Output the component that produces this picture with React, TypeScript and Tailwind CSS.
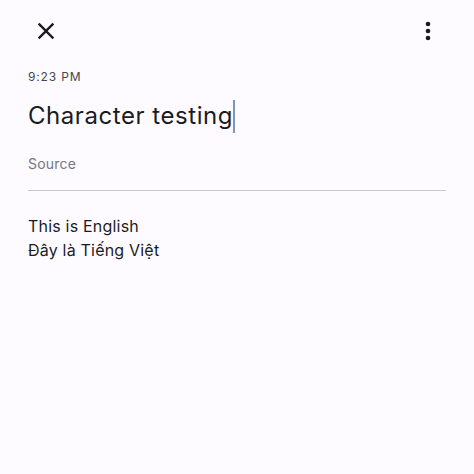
export default function App() {
  return (
    <div className="h-[474px] w-full overflow-hidden bg-[#fdfbff] text-[#1b1b1f] [font-family:Inter,Roboto,'Noto_Sans',sans-serif]">
      <header className="flex h-[61px] items-center justify-between px-8">
        <button className="flex h-7 w-7 items-center justify-center" aria-label="Close">
          <svg width="28" height="28" viewBox="0 0 24 24" fill="currentColor">
            <path d="M19 6.41L17.59 5 12 10.59 6.41 5 5 6.41 10.59 12 5 17.59 6.41 19 12 13.41 17.59 19 19 17.59 13.41 12z" />
          </svg>
        </button>
        <button className="flex h-7 w-7 items-center justify-center" aria-label="More">
          <svg width="28" height="28" viewBox="0 0 24 24" fill="currentColor">
            <circle cx="12" cy="6" r="2" />
            <circle cx="12" cy="12" r="2" />
            <circle cx="12" cy="18" r="2" />
          </svg>
        </button>
      </header>

      <main className="px-7">
        <div className="mt-[7.5px] text-[12px] leading-4 tracking-[0.85px] text-[#44474e]">9:23 PM</div>

        <div className="mt-[15px] flex items-center text-[24px] leading-8 tracking-[0.55px]">
          <span>Character testing</span>
          <span className="h-[33px] w-[2px] bg-[#7b97bb]" />
        </div>

        <div className="mt-[21.4px] border-b border-[#c8c7cf] pb-[16.5px] text-[14px] leading-5 tracking-[0.2px] text-[#74777f]">
          Source
        </div>

        <div className="mt-[23px] text-[16px] leading-6 tracking-[0.2px]">
          <p>This is English</p>
          <p>Đây là Tiếng Việt</p>
        </div>
      </main>
    </div>
  );
}
